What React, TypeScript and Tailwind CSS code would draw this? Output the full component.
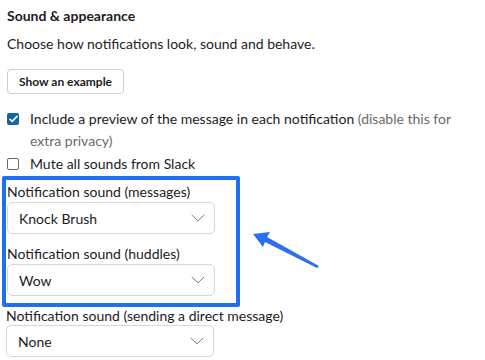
import React from "react";

function Chevron() {
  return (
    <svg width="14" height="8" viewBox="0 0 14 8" fill="none" className="shrink-0">
      <path d="M1 1.2l6 5.6 6-5.6" stroke="#7c7b7c" strokeWidth="1" strokeLinecap="round" strokeLinejoin="round" />
    </svg>
  );
}

function Select({ value }: { value: string }) {
  return (
    <div className="w-[208px] h-[32px] border border-[#d6d6d6] rounded-[5px] flex items-center justify-between pl-[11px] pr-[9px] bg-white">
      <span className="text-[14px] text-[#1d1c1d]">{value}</span>
      <Chevron />
    </div>
  );
}

export default function App() {
  return (
    <div className="w-[485px] h-[360px] bg-white overflow-hidden relative font-['Lato','Noto_Sans',sans-serif] text-[#1d1c1d]">
      <div className="pl-[7px] pt-[6px]">
        <div className="text-[14px] leading-[20px] font-bold">Sound &amp; appearance</div>
        <div className="mt-[8px] text-[14px] leading-[20px]">Choose how notifications look, sound and behave.</div>
        <button className="mt-[15px] w-[117px] h-[25px] border border-[#cfcfcf] rounded-[4px] text-[12px] font-bold flex items-center justify-center">
          Show an example
        </button>
        <div className="mt-[14px] flex items-start">
          <div className="mt-[5px] w-[12px] h-[12px] rounded-[2px] bg-[#1264a3] flex items-center justify-center shrink-0">
            <svg width="9" height="8" viewBox="0 0 9 8"><path d="M1 4.2l2.2 2.2L8 1.4" stroke="white" strokeWidth="1.6" fill="none" strokeLinecap="round" strokeLinejoin="round" /></svg>
          </div>
          <div className="ml-[11px] text-[14px] leading-[22px] w-[430px]">
            Include a preview of the message in each notification <span className="text-[#6b6a6b]">(disable this for extra privacy)</span>
          </div>
        </div>
        <div className="mt-[1px] flex items-center">
          <div className="w-[12px] h-[12px] rounded-[2px] border border-[#6b6a6b] shrink-0" />
          <div className="ml-[11px] text-[14px] leading-[22px]">Mute all sounds from Slack</div>
        </div>
      </div>
      <div className="ml-[2px] mt-[1px] w-[238px] border-[4px] border-[#1f6ff0] rounded-[2px] pl-[1px] pb-[7px]">
        <div className="text-[14px] leading-[20px] mt-[2px]">Notification sound (messages)</div>
        <Select value="Knock Brush" />
        <div className="text-[14px] leading-[20px] mt-[10px]">Notification sound (huddles)</div>
        <Select value="Wow" />
      </div>
      <div className="pl-[6px]">
        <div className="text-[14px] leading-[18px]">Notification sound (sending a direct message)</div>
        <Select value="None" />
      </div>
      <svg className="absolute left-[250px] top-[228px]" width="72" height="42" viewBox="0 0 72 42">
        <path d="M3 6 L20 4 L17 9 L69 38 L67 40 L15 14 L13 19 Z" fill="#2b6ef2" />
      </svg>
    </div>
  );
}
